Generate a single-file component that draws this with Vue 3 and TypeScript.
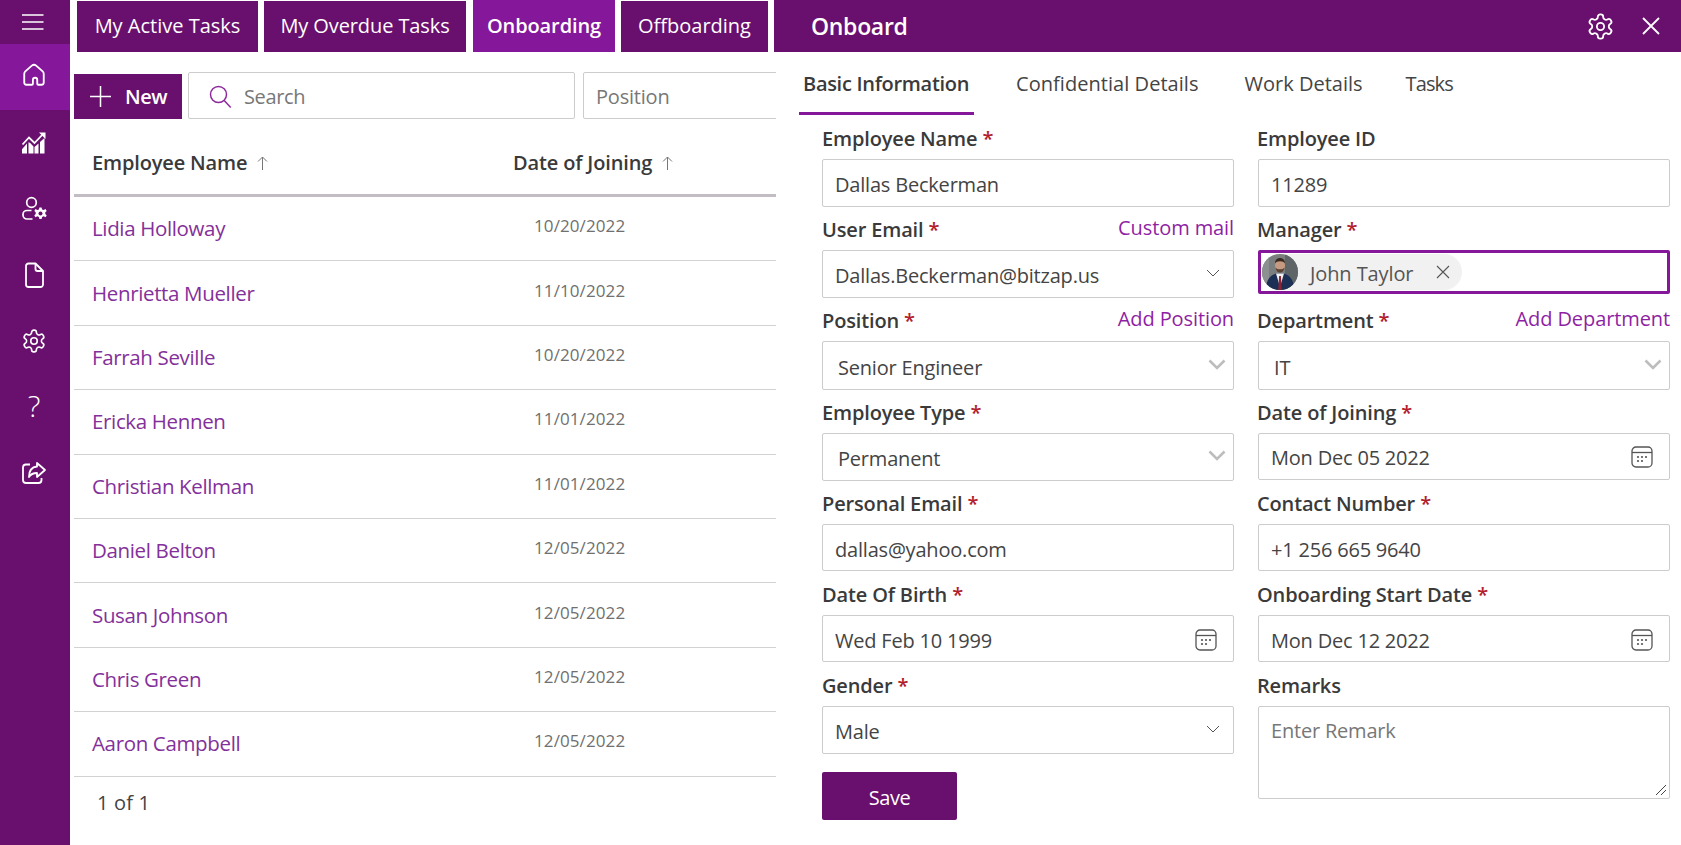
<script setup lang="ts">
const tabs = [
  { label: 'My Active Tasks', cls: 't1' },
  { label: 'My Overdue Tasks', cls: 't2' },
  { label: 'Onboarding', cls: 't3 active' },
  { label: 'Offboarding', cls: 't4' },
]
const rows = [
  ['Lidia Holloway', '10/20/2022'],
  ['Henrietta Mueller', '11/10/2022'],
  ['Farrah Seville', '10/20/2022'],
  ['Ericka Hennen', '11/01/2022'],
  ['Christian Kellman', '11/01/2022'],
  ['Daniel Belton', '12/05/2022'],
  ['Susan Johnson', '12/05/2022'],
  ['Chris Green', '12/05/2022'],
  ['Aaron Campbell', '12/05/2022'],
]
const panelTabs = [
  { label: 'Basic Information', cls: 'p1 on' },
  { label: 'Confidential Details', cls: 'p2' },
  { label: 'Work Details', cls: 'p3' },
  { label: 'Tasks', cls: 'p4' },
]
interface Field {
  label: string
  req?: boolean
  value?: string
  link?: string
  kind: 'text' | 'thin' | 'bold' | 'date'
}
const top: Field[] = [
  { label: 'Employee Name', req: true, value: 'Dallas Beckerman', kind: 'text' },
  { label: 'Employee ID', value: '11289', kind: 'text' },
  { label: 'User Email', req: true, value: 'Dallas.Beckerman@bitzap.us', link: 'Custom mail', kind: 'thin' },
]
const rest: Field[] = [
  { label: 'Position', req: true, value: 'Senior Engineer', link: 'Add Position', kind: 'bold' },
  { label: 'Department', req: true, value: 'IT', link: 'Add Department', kind: 'bold' },
  { label: 'Employee Type', req: true, value: 'Permanent', kind: 'bold' },
  { label: 'Date of Joining', req: true, value: 'Mon Dec 05 2022', kind: 'date' },
  { label: 'Personal Email', req: true, value: 'dallas@yahoo.com', kind: 'text' },
  { label: 'Contact Number', req: true, value: '+1 256 665 9640', kind: 'text' },
  { label: 'Date Of Birth', req: true, value: 'Wed Feb 10 1999', kind: 'date' },
  { label: 'Onboarding Start Date', req: true, value: 'Mon Dec 12 2022', kind: 'date' },
  { label: 'Gender', req: true, value: 'Male', kind: 'thin' },
]
const gear =
  'M12.22 2h-.44a2 2 0 0 0-2 2v.18a2 2 0 0 1-1 1.73l-.43.25a2 2 0 0 1-2 0l-.15-.08a2 2 0 0 0-2.73.73l-.22.38a2 2 0 0 0 .73 2.73l.15.1a2 2 0 0 1 1 1.72v.51a2 2 0 0 1-1 1.74l-.15.09a2 2 0 0 0-.73 2.73l.22.38a2 2 0 0 0 2.73.73l.15-.08a2 2 0 0 1 2 0l.43.25a2 2 0 0 1 1 1.73V20a2 2 0 0 0 2 2h.44a2 2 0 0 0 2-2v-.18a2 2 0 0 1 1-1.73l.43-.25a2 2 0 0 1 2 0l.15.08a2 2 0 0 0 2.73-.73l.22-.39a2 2 0 0 0-.73-2.73l-.15-.08a2 2 0 0 1-1-1.74v-.5a2 2 0 0 1 1-1.74l.15-.09a2 2 0 0 0 .73-2.73l-.22-.38a2 2 0 0 0-2.73-.73l-.15.08a2 2 0 0 1-2 0l-.43-.25a2 2 0 0 1-1-1.73V4a2 2 0 0 0-2-2z'
</script>

<template>
  <div class="app">
    <nav class="side">
      <div class="side-item burger">
        <svg width="24" height="18" viewBox="0 0 24 18" fill="none" stroke="#fff" stroke-width="1.3">
          <path d="M1 2h21.5M1 9h21.5M1 16h21.5" />
        </svg>
      </div>
      <div class="side-item home">
        <svg width="26" height="26" viewBox="0 0 24 24" fill="none" stroke="#fff" stroke-width="1.7" stroke-linejoin="round">
          <path d="M10 3.4a3 3 0 0 1 4 0l6 5.3a3 3 0 0 1 1 2.3V19a2 2 0 0 1-2 2h-3a1 1 0 0 1-1-1v-3.500a2 2 0 0 0-4 0V20a1 1 0 0 1-1 1H5a2 2 0 0 1-2-2v-8a3 3 0 0 1 1-2.300z" />
        </svg>
      </div>
      <div class="side-item">
        <svg width="26" height="24" viewBox="0 0 26 24" fill="#fff">
          <path d="M1 22.500v-4.200l5-5.800v10zM7.500 22.500V11.200l1.700.9 3.300 3.300v7.100zM13.500 22.500V16l4-3.500v10zM19 22.500V11l4.500-4v15.500z" />
          <path d="M1.500 13.500 8 6.500l5.500 5.500 9-9.500" fill="none" stroke="#fff" stroke-width="1.800" />
          <path d="M18 1.500h6.500V8z" />
        </svg>
      </div>
      <div class="side-item">
        <svg width="26" height="26" viewBox="0 0 26 26" fill="none" stroke="#fff" stroke-width="1.700">
          <circle cx="10.500" cy="6.500" r="4.800" />
          <path d="M10.500 14.500H6a4 4 0 0 0-4 4v.5a4 4 0 0 0 4 4h5.500" />
          <path d="M18.400 11.500h2.200l.5 1.900 1.600.7 1.800-1 1.200 1.800-1.400 1.400v1.800l1.400 1.400-1.200 1.800-1.800-1-1.600.7-.5 1.900h-2.200l-.5-1.900-1.600-.7-1.800 1-1.200-1.800 1.400-1.400v-1.800l-1.400-1.400 1.200-1.800 1.800 1 1.600-.7z" fill="#fff" stroke="none" />
          <circle cx="19.500" cy="17.500" r="2" fill="#69106f" stroke="none" />
        </svg>
      </div>
      <div class="side-item">
        <svg width="24" height="26" viewBox="0 0 24 26" fill="none" stroke="#fff" stroke-width="1.800" stroke-linejoin="round">
          <path d="M4 4a2.500 2.500 0 0 1 2.500-2.500h7L21 9v13.500a2.500 2.500 0 0 1-2.500 2.500h-12A2.500 2.500 0 0 1 4 22.500z" />
          <path d="M13.500 1.500V7a2 2 0 0 0 2 2H21" />
        </svg>
      </div>
      <div class="side-item">
        <svg width="26" height="26" viewBox="0 0 24 24" fill="none" stroke="#fff" stroke-width="1.500">
          <path :d="gear" />
          <circle cx="12" cy="12" r="3" />
        </svg>
      </div>
      <div class="side-item qmark">?</div>
      <div class="side-item">
        <svg width="26" height="24" viewBox="0 0 26 24" fill="none" stroke="#fff" stroke-width="1.800" stroke-linejoin="round">
          <path d="M9 3.500H5a3 3 0 0 0-3 3V19a3 3 0 0 0 3 3h12.500a3 3 0 0 0 3-3v-2" />
          <path d="M16 2l8 7-8 7v-4c-4.500 0-6.500 1.500-8 4 0-6 3-10 8-10.500z" />
        </svg>
      </div>
    </nav>

    <section class="list">
      <div class="tabs">
        <button v-for="t in tabs" :key="t.label" class="tab" :class="t.cls">{{ t.label }}</button>
      </div>
      <div class="toolbar">
        <button class="new">
          <svg width="21" height="21" viewBox="0 0 21 21" stroke="#fff" stroke-width="1.500"><path d="M10.500 0v21M0 10.500h21" /></svg>
          <span>New</span>
        </button>
        <div class="search">
          <svg width="23" height="24" viewBox="0 0 23 24" fill="none" stroke="#8d2a9c" stroke-width="1.500">
            <circle cx="9.500" cy="9.500" r="8" />
            <path d="M15.200 15.500l6.500 7" />
          </svg>
          <span>Search</span>
        </div>
        <div class="filter">Position</div>
      </div>
      <div class="thead">
        <div class="th col-a">Employee Name <svg class="up" width="11" height="14" viewBox="0 0 11 14" fill="none" stroke="#777" stroke-width="1"><path d="M5.500 14V1M1 5.500 5.500 1 10 5.500" /></svg></div>
        <div class="th col-b">Date of Joining <svg class="up" width="11" height="14" viewBox="0 0 11 14" fill="none" stroke="#777" stroke-width="1"><path d="M5.500 14V1M1 5.500 5.500 1 10 5.500" /></svg></div>
      </div>
      <div v-for="r in rows" :key="r[0]" class="row">
        <a class="name col-a">{{ r[0] }}</a>
        <span class="date col-c">{{ r[1] }}</span>
      </div>
      <div class="pager">1 of 1</div>
    </section>

    <aside class="panel">
      <header class="phead">
        <h1>Onboard</h1>
        <svg class="pgear" width="29" height="29" viewBox="0 0 24 24" fill="none" stroke="#fff" stroke-width="1.500">
          <path :d="gear" />
          <circle cx="12" cy="12" r="3" />
        </svg>
        <svg class="pclose" width="18" height="18" viewBox="0 0 18 18" stroke="#fff" stroke-width="1.800"><path d="M1 1l16 16M17 1 1 17" /></svg>
      </header>
      <div class="ptabs">
        <div v-for="t in panelTabs" :key="t.label" class="ptab" :class="t.cls">{{ t.label }}</div>
      </div>
      <form class="form" @submit.prevent>
        <div v-for="f in top" :key="f.label" class="field">
          <div class="lab">
            <label>{{ f.label }}<i v-if="f.req"> *</i></label>
            <a v-if="f.link">{{ f.link }}</a>
          </div>
          <div class="inp" :class="f.kind">
            <span>{{ f.value }}</span>
            <svg v-if="f.kind === 'thin'" class="chev" width="14" height="8" viewBox="0 0 14 8" fill="none" stroke="#555" stroke-width="1"><path d="M1 1l6 6 6-6" /></svg>
          </div>
        </div>
        <div class="field">
          <div class="lab"><label>Manager<i> *</i></label></div>
          <div class="picker">
            <div class="chip">
              <svg class="ava" width="36" height="36" viewBox="0 0 36 36">
                <defs>
                  <clipPath id="avaclip"><circle cx="18" cy="18" r="18" /></clipPath>
                </defs>
                <g clip-path="url(#avaclip)">
                  <rect width="36" height="36" fill="#7b7f80" />
                  <rect x="23" width="13" height="36" fill="#5f6467" />
                  <rect width="7" height="36" fill="#8d9090" />
                  <path d="M4 36c0-9 3-14 10-16.500h8c7 2.500 10 7.500 10 16.500z" fill="#1c2f55" />
                  <path d="M14 19.500 18 33l4-13.500z" fill="#f1f1f1" />
                  <path d="M17.100 22h1.800l.8 14h-3.400z" fill="#8d2233" />
                  <ellipse cx="18" cy="11.500" rx="5" ry="6.800" fill="#c69a80" />
                  <path d="M13 9.500c0-4 2.500-5.500 5-5.500s5 1.500 5 5.500c-1-1.500-2.500-2.300-5-2.300s-4 .8-5 2.300z" fill="#3a2a22" />
                  <path d="M13.400 13.500c.8 3.800 2.600 5 4.600 5s3.800-1.200 4.600-5c-1 1.300-2.700 1.800-4.600 1.800s-3.600-.5-4.600-1.800z" fill="#5a4335" />
                </g>
              </svg>
              <span>John Taylor</span>
              <svg class="chipx" width="14" height="14" viewBox="0 0 14 14" stroke="#555" stroke-width="1.100"><path d="M1 1l12 12M13 1 1 13" /></svg>
            </div>
          </div>
        </div>
        <div v-for="f in rest" :key="f.label" class="field">
          <div class="lab">
            <label>{{ f.label }}<i v-if="f.req"> *</i></label>
            <a v-if="f.link">{{ f.link }}</a>
          </div>
          <div class="inp" :class="f.kind">
            <span>{{ f.value }}</span>
            <svg v-if="f.kind === 'thin'" class="chev" width="14" height="8" viewBox="0 0 14 8" fill="none" stroke="#555" stroke-width="1"><path d="M1 1l6 6 6-6" /></svg>
            <svg v-if="f.kind === 'bold'" class="chevb" width="18" height="11" viewBox="0 0 18 11" fill="none" stroke="#bdbdbd" stroke-width="2.600"><path d="M1.500 1.500 9 9l7.500-7.500" /></svg>
            <svg v-if="f.kind === 'date'" class="cal" width="22" height="22" viewBox="0 0 22 22" fill="none" stroke="#555" stroke-width="1.300">
              <rect x="1" y="1" width="20" height="20" rx="4" />
              <path d="M1 6.500h20" />
              <g fill="#555" stroke="none">
                <circle cx="7" cy="11" r="1.100" /><circle cx="11" cy="11" r="1.100" /><circle cx="15" cy="11" r="1.100" />
                <circle cx="7" cy="15" r="1.100" /><circle cx="11" cy="15" r="1.100" />
              </g>
            </svg>
          </div>
        </div>
        <div class="field remarks">
          <div class="lab"><label>Remarks</label></div>
          <div class="area">
            <span>Enter Remark</span>
            <svg class="grip" width="12" height="12" viewBox="0 0 12 12" stroke="#444" stroke-width="1"><path d="M1 11 11 1M6 11l5-5" /></svg>
          </div>
        </div>
        <button class="save" type="submit">Save</button>
      </form>
    </aside>
  </div>
</template>

<style>
html, body { margin: 0; background: #fff; }
</style>

<style scoped>
.app {
  display: flex;
  width: 1681px;
  height: 845px;
  overflow: hidden;
  background: #fff;
  font-family: "Open Sans", "Noto Sans", sans-serif;
  color: #333;
}
.side {
  flex: 0 0 70px;
  background: #69106f;
  display: flex;
  flex-direction: column;
}
.side-item {
  height: 66px;
  display: flex;
  align-items: center;
  justify-content: center;
  padding-right: 2px;
  flex: none;
}
.burger { height: 44px; padding-right: 4px; box-sizing: border-box; }
.home { background: #84179a; height: 66px; box-sizing: border-box; padding-bottom: 4px; }
.qmark { color: #fff; font-size: 30px; font-weight: 300; height: 62px; padding-bottom: 4px; }

.list {
  flex: 0 0 706px;
  width: 706px;
  overflow: hidden;
  box-sizing: border-box;
  padding-left: 4px;
}
.tabs {
  display: flex;
  gap: 6px;
  padding: 1px 0 0 3px;
  white-space: nowrap;
}
.tab {
  height: 51px;
  border: 0;
  padding: 0 0 3px;
  background: #69106f;
  color: #fff;
  font: 400 20px "Open Sans", sans-serif;
  flex: none;
}
.t1 { width: 181px; }
.t2 { width: 202px; letter-spacing: -0.1px; }
.t3 { width: 142px; margin-left: 1px; }
.t4 { width: 147px; }
.tab.active { background: #84179a; font-weight: 600; letter-spacing: -0.1px; height: 52px; margin-top: -1px; padding-bottom: 2px; }
.toolbar {
  display: flex;
  align-items: flex-end;
  gap: 6px;
  margin-top: 20px;
  height: 47px;
  white-space: nowrap;
}
.new {
  flex: none;
  width: 108px;
  height: 45px;
  border: 0;
  padding: 0 0 0 16px;
  background: #69106f;
  color: #fff;
  display: flex;
  align-items: center;
  gap: 14px;
  font: 600 20px "Open Sans", sans-serif;
  letter-spacing: -0.5px;
}
.search, .filter {
  flex: none;
  height: 47px;
  box-sizing: border-box;
  border: 1px solid #ccc;
  border-radius: 2px;
  display: flex;
  align-items: center;
  padding-top: 2px;
  font-size: 20px;
  letter-spacing: -0.35px;
  color: #777;
}
.search { width: 387px; padding-left: 20px; gap: 12px; }
.filter { width: 220px; margin-left: 2px; padding-left: 12px; letter-spacing: -0.2px; }
.thead {
  display: flex;
  align-items: center;
  height: 78px;
  border-bottom: 3px solid #c2bdc2;
  padding-top: 12px;
  box-sizing: border-box;
  width: 702px;
}
.th {
  font-size: 20px;
  font-weight: 600;
  letter-spacing: -0.15px;
  color: #3a3a3a;
}
.up { margin-left: 5px; }
.col-a { flex: 0 0 439px; box-sizing: border-box; padding-left: 18px; }
.col-b { flex: 1; padding-left: 0; }
.col-c { flex: 1; margin-left: 21px; padding-bottom: 6px; }
.row {
  display: flex;
  align-items: center;
  height: 64.4px;
  box-sizing: border-box;
  border-bottom: 1px solid #d2d2d2;
  width: 702px;
}
.name { color: #84309a; font-size: 20.5px; letter-spacing: -0.35px; padding-bottom: 1px; }
.date { color: #707070; font-size: 17px; letter-spacing: 0.1px; }
.pager { padding: 12px 0 0 23px; font-size: 20px; letter-spacing: 0.2px; color: #444; }

.panel {
  flex: 0 0 907px;
  width: 907px;
  margin-left: -2px;
  position: relative;
}
.phead {
  height: 52px;
  background: #69106f;
  display: flex;
  align-items: center;
  padding-left: 37px;
  color: #fff;
}
.phead h1 { margin: 0; font-size: 23px; font-weight: 600; letter-spacing: -0.3px; flex: 1; }
.pgear { margin-right: 27px; }
.pclose { margin-right: 21px; }
.ptabs {
  display: flex;
  height: 63px;
  padding-left: 25px;
  box-sizing: border-box;
}
.ptab {
  height: 63px;
  box-sizing: border-box;
  padding: 18px 5px 0;
  font-size: 20px;
  color: #444;
  white-space: nowrap;
}
.ptab.on { width: 175px; padding-left: 4px; color: #3a3a3a; font-weight: 600; letter-spacing: -0.3px; border-bottom: 3px solid #84179a; }
.p2 { margin-left: 37px; letter-spacing: 0.05px; }
.p3 { margin-left: 36px; }
.p4 { margin-left: 33px; letter-spacing: -0.9px; }
.form {
  display: grid;
  grid-template-columns: 412px 412px;
  column-gap: 24px;
  grid-auto-rows: 91.2px;
  padding: 4px 0 0 48px;
}
.field { display: flex; flex-direction: column; min-width: 0; }
.field:nth-child(even) label { margin-left: -1px; }
.remarks { grid-row: span 2; }
.lab {
  height: 40px;
  display: flex;
  align-items: center;
  justify-content: space-between;
  flex: none;
}
label { font-size: 20px; font-weight: 600; letter-spacing: -0.15px; color: #3a3a3a; margin-top: -1px; }
i { font-style: normal; color: #b3202c; }
.lab a { color: #8f1fa3; font-size: 20px; letter-spacing: -0.1px; margin-top: -5px; }
.inp {
  height: 47.5px;
  flex: none;
  box-sizing: border-box;
  border: 1px solid #ccc;
  border-radius: 2px;
  display: flex;
  align-items: center;
  padding: 3px 13px 0 12px;
  font-size: 20px;
  letter-spacing: -0.2px;
  color: #444;
  position: relative;
}
.inp span { flex: 1; }
.bold { padding-left: 15px; height: 48.5px; }
.chev { margin-top: -5px; }
.chevb { margin-right: -6px; margin-top: -5px; }
.cal { margin-right: 3px; margin-top: -1px; }
.picker {
  height: 44px;
  box-sizing: border-box;
  border: 3px solid #84179a;
  border-radius: 2px;
  padding: 2px 1px;
  display: flex;
  align-items: center;
}
.chip {
  height: 36px;
  width: 200px;
  border-radius: 18px;
  background: #f1f1f1;
  display: flex;
  align-items: center;
  font-size: 20px;
  letter-spacing: -0.1px;
  color: #555;
  white-space: nowrap;
}
.chip span { padding-top: 2px; }
.ava { flex: none; margin-right: 12px; }
.chipx { margin-left: 23px; }
.area {
  height: 93px;
  box-sizing: border-box;
  border: 1px solid #ccc;
  border-radius: 2px;
  padding: 10px 12px;
  font-size: 20px;
  letter-spacing: -0.2px;
  color: #777;
  position: relative;
}
.grip { position: absolute; right: 2px; bottom: 2px; }
.save {
  align-self: start;
  width: 135px;
  height: 48px;
  margin-top: 15px;
  border: 0;
  border-radius: 2px;
  background: #69106f;
  color: #fff;
  font: 500 20px "Open Sans", sans-serif;
  letter-spacing: -0.4px;
  padding: 2px 0 0;
}
</style>
